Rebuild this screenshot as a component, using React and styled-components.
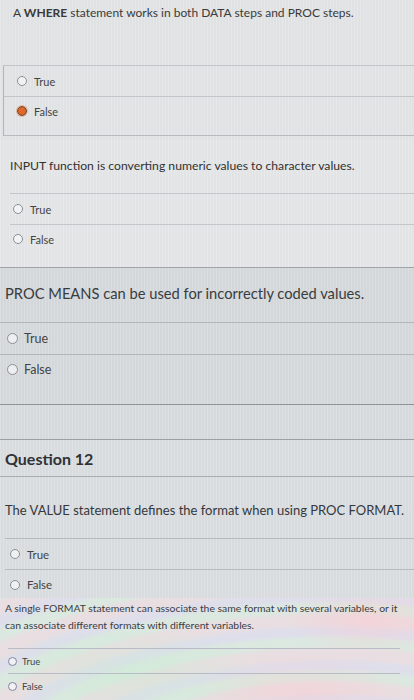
import React from "react";
import styled, { createGlobalStyle } from "styled-components";

const GlobalStyle = createGlobalStyle`
  html, body {
    margin: 0;
    padding: 0;
    background: #dfe2e5;
  }
  body {
    font-family: Lato, "Open Sans", "Liberation Sans", sans-serif;
    color: #333;
  }
`;

// faint vertical moire of the photographed screen
const stripes = `repeating-linear-gradient(90deg, rgba(255,255,255,0.12) 0 1px, rgba(0,0,0,0.01) 1px 3px)`;

const Page = styled.div`
  width: 414px;
  height: 700px;
  overflow: hidden;
  display: flex;
  flex-direction: column;
`;

const Section = styled.div`
  position: relative;
  height: ${(p) => p.$h}px;
  flex: none;
  background: ${stripes}, ${(p) => p.$bg};
  border-bottom: ${(p) => (p.$line ? `1px solid ${p.$line}` : "none")};
  box-sizing: border-box;
`;

const Shiny = styled(Section)`
  background:
    radial-gradient(ellipse 120px 50px at 370px 22px, rgba(255, 198, 206, 0.45), transparent 70%),
    radial-gradient(ellipse 200px 70px at 130px 75px, rgba(200, 236, 208, 0.45), transparent 70%),
    radial-gradient(ellipse 160px 60px at 300px 95px, rgba(252, 200, 205, 0.4), transparent 70%),
    repeating-radial-gradient(
      ellipse 520px 260px at 330px 230px,
      rgba(248, 204, 210, 0.3) 0 16px,
      rgba(208, 236, 212, 0.4) 26px 38px,
      rgba(216, 210, 240, 0.38) 48px 58px,
      rgba(248, 204, 210, 0.3) 68px
    ),
    #e2e6e8;
`;

const Prompt = styled.div`
  font-size: ${(p) => p.$size}px;
  line-height: ${(p) => p.$lh}px;
  padding: ${(p) => p.$top}px ${(p) => p.$right || 6}px 0 ${(p) => p.$left}px;
  margin-bottom: ${(p) => p.$gap}px;
  color: ${(p) => p.$color || "#353535"};
  white-space: ${(p) => (p.$wrap ? "normal" : "nowrap")};
`;

const Heading = styled.div`
  height: 36px;
  display: flex;
  align-items: center;
  padding-left: 5px;
  font-size: 16px;
  font-weight: 700;
  color: #2e3236;
  border-bottom: 1px solid #a7adb2;
`;

const Options = styled.div`
  margin-left: ${(p) => p.$left || 0}px;
  margin-right: ${(p) => p.$right || 0}px;
  border-top: 1px solid ${(p) => p.$line || "#b9bec2"};
  border-left: ${(p) => (p.$edge ? `1px solid ${p.$edge}` : "none")};
  padding-bottom: ${(p) => p.$pad || 0}px;
  border-bottom: ${(p) => (p.$bottom ? `1px solid ${p.$bottom}` : "none")};
`;

const Option = styled.div`
  height: ${(p) => p.$h}px;
  display: flex;
  align-items: center;
  gap: ${(p) => p.$gap}px;
  padding-left: ${(p) => p.$indent}px;
  font-size: ${(p) => p.$size}px;
  color: #444;
  border-bottom: ${(p) => (p.$line ? `1px solid ${p.$line}` : "none")};
`;

const Radio = styled.span`
  flex: none;
  width: ${(p) => p.$d}px;
  height: ${(p) => p.$d}px;
  border-radius: 50%;
  box-sizing: border-box;
  border: 1px solid ${(p) => (p.$checked ? "#7a4a2c" : p.$tint || "#8b9094")};
  background: ${(p) =>
    p.$checked
      ? "radial-gradient(circle, #e0692a 0 55%, #c45a22 70%)"
      : "rgba(255,255,255,0.55)"};
  box-shadow: ${(p) => (p.$checked ? "0 0 0 1px rgba(224,105,42,0.35)" : "none")};
`;

const Choice = ({ label, checked, d, gap, indent, size, h, line, tint }) => (
  <Option $h={h} $gap={gap} $indent={indent} $size={size} $line={line}>
    <Radio $d={d} $checked={checked} $tint={tint} />
    <span>{label}</span>
  </Option>
);

export default function App() {
  return (
    <Page>
      <GlobalStyle />

      <Section $h={140} $bg="#e2e4e6">
        <Prompt $size={12} $lh={16} $top={5} $left={13} $gap={44} $color="#3a3a3a">
          A <b>WHERE</b> statement works in both DATA steps and PROC steps.
        </Prompt>
        <Options $left={3} $edge="#b4b8bc" $line="#c2c6c9" $bottom="#b7bbbf" $pad={10}>
          <Choice label="True" d={10} gap={7} indent={13} size={11} h={30} line="#c2c6c9" />
          <Choice label="False" d={10} gap={7} indent={13} size={11} h={28} checked />
        </Options>
      </Section>

      <Section $h={128} $bg="#e4e6e8" $line="#9da3a8">
        <Prompt $size={12.2} $lh={16} $top={18} $left={10} $gap={19} $color="#323232">
          INPUT function is converting numeric values to character values.
        </Prompt>
        <Options $left={10} $line="#c3c7ca">
          <Choice label="True" d={10} gap={7} indent={3} size={11} h={30} line="#c3c7ca" />
          <Choice label="False" d={10} gap={7} indent={3} size={11} h={28} />
        </Options>
      </Section>

      <Section $h={137} $bg="#d6dadd" $line="#8c9297">
        <Prompt $size={14.7} $lh={18} $top={16} $left={5} $gap={20} $color="#383c40">
          PROC MEANS can be used for incorrectly coded values.
        </Prompt>
        <Options $line="#b2b7bb">
          <Choice label="True" d={11} gap={6} indent={7} size={12.5} h={31} line="#b2b7bb" />
          <Choice label="False" d={11} gap={6} indent={7} size={12.5} h={28} />
        </Options>
      </Section>

      <Section $h={35} $bg="#d8dcdf" $line="#9aa0a5" />

      <Section $h={158} $bg="#dadee1">
        <Heading>Question 12</Heading>
        <Prompt $size={13} $lh={16} $top={25} $left={5} $gap={20} $color="#34383c">
          The VALUE statement defines the format when using PROC FORMAT.
        </Prompt>
        <Options $left={5} $line="#b6bbbf">
          <Choice label="True" d={10} gap={7} indent={5} size={11.5} h={30} line="#b6bbbf" />
          <Choice label="False" d={10} gap={7} indent={5} size={11.5} h={29} />
        </Options>
      </Section>

      <Shiny $h={102}>
        <Prompt $size={10.4} $lh={17} $top={2} $left={5} $right={8} $gap={14} $color="#3b3d44" $wrap>
          A single FORMAT statement can associate the same format with several variables, or it can associate different formats with different variables.
        </Prompt>
        <Options $left={8} $right={14} $line="#b9bcc6">
          <Choice label="True" d={9} gap={5} indent={0} size={9.5} h={24} line="#b9bcc6" tint="#7f86a0" />
          <Choice label="False" d={9} gap={5} indent={0} size={9.5} h={24} tint="#7f86a0" />
        </Options>
      </Shiny>
    </Page>
  );
}
